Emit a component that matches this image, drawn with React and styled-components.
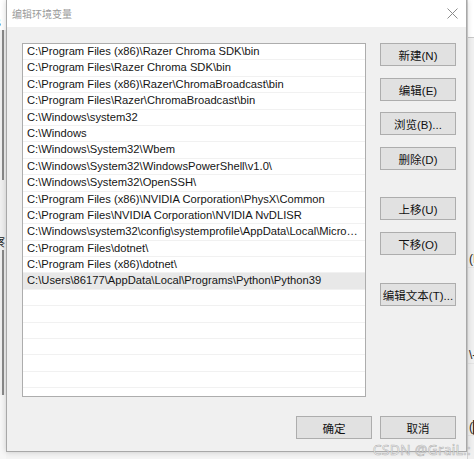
import React from "react";
import styled, { createGlobalStyle } from "styled-components";

const paths = [
  "C:\\Program Files (x86)\\Razer Chroma SDK\\bin",
  "C:\\Program Files\\Razer Chroma SDK\\bin",
  "C:\\Program Files (x86)\\Razer\\ChromaBroadcast\\bin",
  "C:\\Program Files\\Razer\\ChromaBroadcast\\bin",
  "C:\\Windows\\system32",
  "C:\\Windows",
  "C:\\Windows\\System32\\Wbem",
  "C:\\Windows\\System32\\WindowsPowerShell\\v1.0\\",
  "C:\\Windows\\System32\\OpenSSH\\",
  "C:\\Program Files (x86)\\NVIDIA Corporation\\PhysX\\Common",
  "C:\\Program Files\\NVIDIA Corporation\\NVIDIA NvDLISR",
  "C:\\Windows\\system32\\config\\systemprofile\\AppData\\Local\\Microsoft\\WindowsApps",
  "C:\\Program Files\\dotnet\\",
  "C:\\Program Files (x86)\\dotnet\\",
  "C:\\Users\\86177\\AppData\\Local\\Programs\\Python\\Python39",
];

const EMPTY_ROWS = 7;
const SELECTED = 14;

const sideButtons = [
  { label: "新建(N)", top: 0 },
  { label: "编辑(E)", top: 12 },
  { label: "浏览(B)...", top: 11 },
  { label: "删除(D)", top: 12 },
  { label: "上移(U)", top: 27 },
  { label: "下移(O)", top: 12 },
  { label: "编辑文本(T)...", top: 28 },
];

const GlobalStyle = createGlobalStyle`
  html, body {
    margin: 0;
    padding: 0;
    background: #f7f7f7;
  }
  body {
    font-family: "Segoe UI", "Liberation Sans", "Noto Sans CJK SC", sans-serif;
    font-size: 12px;
  }
`;

const Desktop = styled.div`
  position: relative;
  width: 474px;
  height: 459px;
  display: flex;
  overflow: hidden;
  background: #f4f4f4;
`;

/* strips of the window lying behind the dialog */
const BackLeft = styled.div`
  width: 6px;
  flex: none;
  display: flex;
  flex-direction: column;
  background: #f0f0f0;
`;

const BackChar = styled.div`
  height: ${(p) => p.$h}px;
  margin-left: -7px;
  display: flex;
  align-items: flex-end;
  font-family: "Noto Sans CJK SC", sans-serif;
  font-size: 12px;
  line-height: 16px;
  color: #222;
  background: ${(p) => p.$bg || "transparent"};
`;

const BackEdge = styled.div`
  height: ${(p) => p.$h}px;
  margin-left: 2px;
  border-left: 2px solid ${(p) => p.$c || "#8a8a8a"};
`;

const BackRight = styled.div`
  flex: 1;
  display: flex;
  flex-direction: column;
  background: #f0f0f0;
  border-left: 1px solid #d4d4d4;
`;

const BackLine = styled.div`
  height: ${(p) => p.$h}px;
  flex: none;
  box-sizing: border-box;
  display: flex;
  align-items: flex-end;
  border-bottom: 1px solid ${(p) => p.$c || "#c8c8c8"};
  background: ${(p) => p.$bg || "transparent"};
  font-size: 12px;
  line-height: 16px;
  color: #222;
  padding-left: 1px;
  white-space: nowrap;
`;

const Window = styled.div`
  width: 461px;
  height: 452px;
  flex: none;
  box-sizing: border-box;
  border: 1px solid #a8a8a8;
  border-top: none;
  background: #f0f0f0;
  display: flex;
  flex-direction: column;
  box-shadow: 0 0 6px rgba(0, 0, 0, 0.18);
  z-index: 1;
`;

const TitleBar = styled.div`
  height: 27px;
  flex: none;
  background: #ffffff;
  display: flex;
  align-items: center;
  justify-content: space-between;
  padding: 0 8px 0 5px;
`;

const Title = styled.span`
  font-family: "Noto Sans CJK SC", sans-serif;
  font-size: 10px;
  color: #9a9a9a;
`;

const Body = styled.div`
  flex: 1;
  display: grid;
  grid-template-columns: 344px 76px;
  grid-template-rows: 354px auto;
  column-gap: 14px;
  padding: 16px 10px 0 15px;
`;

const List = styled.div`
  box-sizing: border-box;
  border: 1px solid #adadad;
  background: #ffffff;
  overflow: hidden;
  display: flex;
  flex-direction: column;
`;

const Row = styled.div`
  height: 16.4px;
  flex: none;
  box-sizing: border-box;
  padding: 0 4px 0 4px;
  border-bottom: 1px solid #f1f1f1;
  background: ${(p) => (p.$selected ? "#e8e8e8" : "#ffffff")};
  color: #151515;
  font-family: "Segoe UI", "Liberation Sans", sans-serif;
  font-size: 11.2px;
  line-height: 15.4px;
  white-space: nowrap;
  overflow: hidden;
  text-overflow: ellipsis;
`;

const Side = styled.div`
  display: flex;
  flex-direction: column;
`;

const Button = styled.div`
  width: 76px;
  height: 23px;
  flex: none;
  box-sizing: border-box;
  margin-top: ${(p) => p.$top || 0}px;
  border: 1px solid #adadad;
  background: #e1e1e1;
  display: flex;
  align-items: center;
  justify-content: center;
  font-family: "Liberation Sans", "Noto Sans CJK SC", sans-serif;
  font-size: 11.5px;
  color: #111;
  white-space: nowrap;
`;

const Footer = styled.div`
  grid-column: 1 / 3;
  display: flex;
  justify-content: flex-end;
  gap: 8px;
  margin-top: 19px;
`;

const Watermark = styled.div`
  position: absolute;
  right: 3px;
  bottom: 0;
  z-index: 2;
  font-family: "Noto Sans", sans-serif;
  font-size: 14px;
  letter-spacing: 0.2px;
  color: rgba(255, 255, 255, 0.8);
  -webkit-text-stroke: 0.6px rgba(120, 120, 120, 0.55);
  white-space: nowrap;
`;

const CloseIcon = () => (
  <svg width="11" height="11" viewBox="0 0 11 11">
    <path d="M0.5 0.5 L10.5 10.5 M10.5 0.5 L0.5 10.5" stroke="#8c8c8c" strokeWidth="1" />
  </svg>
);

export default function App() {
  return (
    <>
      <GlobalStyle />
      <Desktop>
        <BackLeft>
          <BackChar $h={30} $bg="#ffffff">B</BackChar>
          <BackEdge $h={150} />
          <BackChar $h={70}>察</BackChar>
          <BackEdge $h={145} />
          <BackChar $h={64} $bg="#f7f7f7" />
        </BackLeft>
        <Window>
          <TitleBar>
            <Title>编辑环境变量</Title>
            <CloseIcon />
          </TitleBar>
          <Body>
            <List>
              {paths.map((p, i) => (
                <Row key={p} $selected={i === SELECTED}>
                  {p}
                </Row>
              ))}
              {Array.from({ length: EMPTY_ROWS }, (_, i) => (
                <Row key={"empty" + i} />
              ))}
            </List>
            <Side>
              {sideButtons.map((b) => (
                <Button key={b.label} $top={b.top}>
                  {b.label}
                </Button>
              ))}
            </Side>
            <Footer>
              <Button>确定</Button>
              <Button>取消</Button>
            </Footer>
          </Body>
        </Window>
        <BackRight>
          <BackLine $h={38} $bg="#ffffff" />
          <BackLine $h={230} $c="#e4e4e4">(D</BackLine>
          <BackLine $h={96} $c="#e4e4e4">\-</BackLine>
          <BackLine $h={72} $c="#e4e4e4">(▌</BackLine>
        </BackRight>
        <Watermark>CSDN @GraiL.:</Watermark>
      </Desktop>
    </>
  );
}
